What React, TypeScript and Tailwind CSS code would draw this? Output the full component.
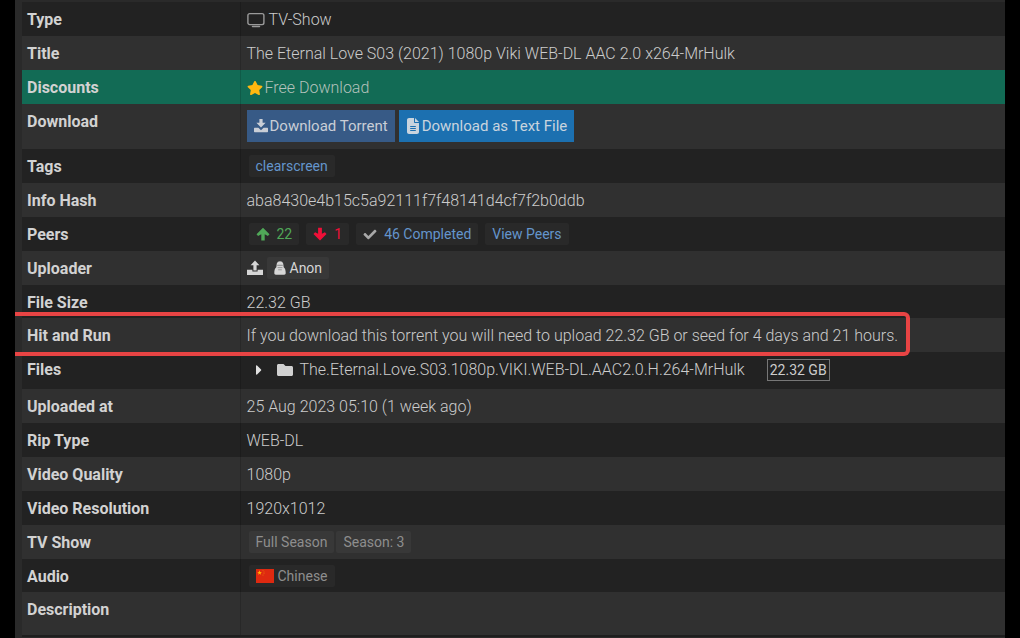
import type { ReactNode } from "react";
import { FaStar, FaCheck, FaFolder, FaCaretRight } from "react-icons/fa";
import { FaFileLines } from "react-icons/fa6";

function TvIcon() {
  return (
    <svg viewBox="0 0 18 16" className="h-4 w-[18px] shrink-0" fill="none" stroke="#9a9a9a" aria-hidden="true">
      <rect x="0.9" y="1.6" width="16" height="11" rx="1.8" strokeWidth="1.4" />
      <path d="M5.5 14.4h7" strokeWidth="1.5" strokeLinecap="round" />
    </svg>
  );
}

function TrayDownIcon() {
  return (
    <svg viewBox="0 0 14 14" className="h-3.5 w-3.5 shrink-0" fill="currentColor" aria-hidden="true">
      <path d="M5.4 0h3.2v3.8h3L7 8.6 2.4 3.8h3z" />
      <path d="M.6 8.8h3.8L7 11.2l2.6-2.4h3.8q.6 0 .6.6v3.2q0 .6-.6.6H.6Q0 13.2 0 12.6V9.4q0-.6.6-.6z" />
    </svg>
  );
}

function TrayUpIcon() {
  return (
    <svg viewBox="0 0 16 16" className="h-4 w-4 shrink-0" fill="currentColor" aria-hidden="true">
      <path d="M8 .5 12.4 5.2H9.6v5.2H6.4V5.2H3.6z" />
      <path d="M0 9.8h5.4v1.6h5.2V9.8H16V15H0z" />
    </svg>
  );
}

function ArrowIcon({ down = false }: { down?: boolean }) {
  return (
    <svg viewBox="0 0 14 14" className="h-3.5 w-3.5 shrink-0" fill="currentColor" aria-hidden="true">
      {down ? (
        <path d="M7 13.4.5 6.9l1.6-1.7 3 1.5V.8h3.8v5.9l3-1.5 1.6 1.7z" />
      ) : (
        <path d="M7 .8.5 7.3l1.6 1.7 3.2-1.7v6.1h3.4V7.3l3.2 1.7 1.6-1.7z" />
      )}
    </svg>
  );
}

function AnonIcon() {
  return (
    <svg viewBox="0 0 12 14" className="h-3.5 w-3 shrink-0" aria-hidden="true">
      <path
        fill="currentColor"
        d="M2.8 2.4Q3.4.3 6 .3t3.2 2.1L9.700 6.200c1.500 1 2 3.200 2 5.800 0 1-.5 1.700-1.500 1.700H1.800C.8 13.700.3 13 .3 12c0-2.600.5-4.800 2-5.800z"
      />
      <path d="M3.2 4.3h5.6" stroke="#777777" strokeWidth="0.8" />
      <path d="M3.6 6.6h4.8M4.2 8.8h3.6" stroke="#888888" strokeWidth="0.8" />
    </svg>
  );
}

function ChinaFlag() {
  return (
    <svg viewBox="0 0 18 14" className="h-3.5 w-[18px] shrink-0" role="img" aria-label="China">
      <rect width="18" height="14" fill="#de2910" />
      <path d="M3.6 1.3l.6 1.7H6L4.6 4.1l.5 1.7-1.5-1-1.5 1 .5-1.7L1.2 3H3z" fill="#ffb300" />
      <circle cx="7" cy="1.6" r=".4" fill="#ffb300" />
      <circle cx="8" cy="3" r=".4" fill="#ffb300" />
      <circle cx="8" cy="4.6" r=".4" fill="#ffb300" />
      <circle cx="7" cy="6" r=".4" fill="#ffb300" />
    </svg>
  );
}

const badge = "inline-flex h-[22px] items-center rounded-xs px-[7px] text-sm font-normal";
const onDark = "bg-[#292929]";
const onLight = "bg-[#383838]";

type RowData = { label: string; value: ReactNode; height?: string; tone?: string; marked?: boolean };

const rows: RowData[] = [
  {
    label: "Type",
    value: (
      <span className="flex items-center gap-1">
        <TvIcon />
        TV-Show
      </span>
    ),
  },
  { label: "Title", value: "The Eternal Love S03 (2021) 1080p Viki WEB-DL AAC 2.0 x264-MrHulk" },
  {
    label: "Discounts",
    tone: "bg-[#126b55]",
    value: (
      <span className="flex items-center gap-0.5 text-[#b4c2bc]">
        <FaStar className="h-4 w-4 text-[#ffb810]" />
        Free Download
      </span>
    ),
  },
  {
    label: "Download",
    height: "h-[45px]",
    value: (
      <span className="flex gap-1 text-[15px] font-normal">
        <button className="flex h-8 items-center gap-0.5 bg-[#375a86] px-[7px] text-[#c9ced6]">
          <TrayDownIcon />
          Download Torrent
        </button>
        <button className="flex h-8 items-center gap-0.5 bg-[#1c70b0] px-[7px] text-[#c9d4de]">
          <FaFileLines className="h-4 w-3.5" />
          Download as Text File
        </button>
      </span>
    ),
  },
  {
    label: "Tags",
    value: (
      <span className="flex pl-0.5">
        <a href="#clearscreen" className={`${badge} ${onDark} text-[#6495cc]`}>
          clearscreen
        </a>
      </span>
    ),
  },
  { label: "Info Hash", value: "aba8430e4b15c5a92111f7f48141d4cf7f2b0ddb" },
  {
    label: "Peers",
    value: (
      <span className="flex gap-[7px] pl-0.5">
        <a href="#seeders" className={`${badge} ${onDark} gap-[7px] text-[#50a858]`}>
          <ArrowIcon /> 22
        </a>
        <a href="#leechers" className={`${badge} ${onDark} gap-[7px] text-[#ee1038]`}>
          <ArrowIcon down /> 1
        </a>
        <a href="#completed" className={`${badge} ${onDark} gap-[7px] text-[#6495cc]`}>
          <FaCheck className="h-[13px] w-3.5 text-[#a8a8a8]" /> 46 Completed
        </a>
        <a href="#peers" className={`${badge} ${onDark} text-[#6495cc]`}>
          View Peers
        </a>
      </span>
    ),
  },
  {
    label: "Uploader",
    value: (
      <span className="flex items-center gap-1 text-[#d6d6d6]">
        <TrayUpIcon />
        <span className={`${badge} ${onLight} gap-1`}>
          <AnonIcon /> Anon
        </span>
      </span>
    ),
  },
  { label: "File Size", value: "22.32 GB", height: "h-[33px]" },
  {
    label: "Hit and Run",
    marked: true,
    value: "If you download this torrent you will need to upload 22.32 GB or seed for 4 days and 21 hours.",
  },
  {
    label: "Files",
    height: "h-[37px]",
    value: (
      <span className="flex items-center pl-2">
        <button aria-label="Expand folder" className="text-[#e0e0e0]">
          <FaCaretRight className="h-4 w-2" />
        </button>
        <FaFolder className="ml-3.5 mr-[7px] h-4 w-4 text-[#d0d0d0]" />
        The.Eternal.Love.S03.1080p.VIKI.WEB-DL.AAC2.0.H.264-MrHulk
        <span className="ml-[22px] border border-[#777777] px-0.5 text-sm font-normal">22.32 GB</span>
      </span>
    ),
  },
  { label: "Uploaded at", value: "25 Aug 2023 05:10 (1 week ago)" },
  { label: "Rip Type", value: "WEB-DL" },
  { label: "Video Quality", value: "1080p" },
  { label: "Video Resolution", value: "1920x1012" },
  {
    label: "TV Show",
    value: (
      <span className="flex gap-0.5 pl-0.5 text-[#8e8e8e]">
        <span className={`${badge} ${onLight}`}>Full Season</span>
        <span className={`${badge} ${onLight}`}>Season: 3</span>
      </span>
    ),
  },
  {
    label: "Audio",
    height: "h-[33px]",
    value: (
      <span className="flex pl-0.5 text-[#8e8e8e]">
        <span className={`${badge} ${onDark} gap-1`}>
          <ChinaFlag /> Chinese
        </span>
      </span>
    ),
  },
  { label: "Description", value: "", height: "h-11" },
];

export default function App() {
  return (
    <div className="min-h-screen bg-black px-[15px] font-[Roboto,sans-serif] text-[#cccccc]">
      <main className="min-h-screen bg-[#2a2a2a] pl-[7px] pt-0.5">
        <table className="w-full table-fixed border-collapse text-left text-base">
          <colgroup>
            <col className="w-[218px]" />
            <col />
          </colgroup>
          <tbody className="border-b-2 border-[#1e1e1e]">
            {rows.map(({ label, value, height = "h-[34px]", tone, marked }) => (
              <tr key={label} className={`${height} ${tone ?? "odd:bg-[#222222] even:bg-[#303030]"}`}>
                <th scope="row" className="relative border-r border-black/15 px-[5px] pt-1.5 align-top font-bold text-[#d2d2d2]">
                  {label}
                  {marked && (
                    <span className="pointer-events-none absolute -left-[7px] -top-1.5 h-11 w-[895px] rounded-r-md border-4 border-l-0 border-[#e84444]" />
                  )}
                </th>
                <td className="whitespace-nowrap px-1.5 pt-1.5 align-top font-light">{value}</td>
              </tr>
            ))}
          </tbody>
        </table>
      </main>
    </div>
  );
}
